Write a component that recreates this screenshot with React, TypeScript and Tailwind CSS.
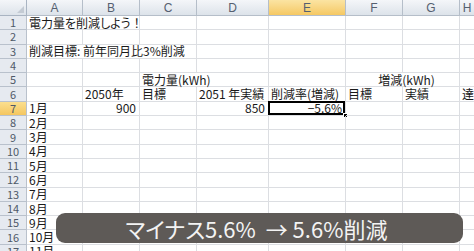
import React from 'react'

type Cell = { text: React.ReactNode; span?: number; align?: 'left' | 'right' | 'center'; selected?: boolean }

const COLS = ['A', 'B', 'C', 'D', 'E', 'F', 'G', 'H']

const sheet: Record<number, Record<string, Cell>> = {
  1: {
    A: {
      text: (
        <>
          電力量を削減しよう<span className="[font-feature-settings:normal]">！</span>
        </>
      ),
      span: 2,
    },
  },
  3: { A: { text: '削減目標: 前年同月比3%削減', span: 3 } },
  5: {
    C: { text: '電力量(kWh)', span: 2 },
    F: { text: '増減(kWh)', span: 2, align: 'center' },
  },
  6: {
    B: { text: '2050年' },
    C: { text: '目標' },
    D: { text: '2051 年実績' },
    E: { text: '削減率(増減)' },
    F: { text: '目標' },
    G: { text: '実績' },
    H: { text: '達' },
  },
  7: {
    A: { text: '1月' },
    B: { text: '900', align: 'right' },
    D: { text: '850', align: 'right' },
    E: { text: '−5.6%', align: 'right', selected: true },
  },
}

for (let r = 8; r <= 17; r++) sheet[r] = { A: { text: `${r - 6}月` } }

const spanClass: Record<number, string> = { 1: 'col-span-1', 2: 'col-span-2', 3: 'col-span-3' }
const alignClass = { left: 'justify-start pl-[2px]', right: 'justify-end pr-[3px]', center: 'justify-center pl-[8px]' }

function Row({ n }: { n: number }) {
  const cells = sheet[n] ?? {}
  const out: React.ReactNode[] = []
  let i = 0
  while (i < COLS.length) {
    const c = cells[COLS[i]]
    const span = c?.span ?? 1
    out.push(
      <div
        key={COLS[i]}
        className={`relative flex items-center whitespace-nowrap border-r border-b border-[#dcdee2] text-[12px] leading-none text-[#1a1a1a] ${spanClass[span]} ${alignClass[c?.align ?? 'left']}`}
      >
        {c?.text}
        {c?.selected && (
          <>
            <div className="absolute -left-[1px] -top-[1px] right-0 bottom-0 border-2 border-black" />
            <div className="absolute -right-[3px] -bottom-[3px] h-[5px] w-[5px] border border-white bg-black" />
          </>
        )}
      </div>
    )
    i += span
  }
  return (
    <>
      <div
        className={`flex items-center justify-center border-r border-b border-[#b9c1cc] text-[11px] leading-none text-[#4e5968] ${
          n === 7 ? 'bg-gradient-to-b from-[#fbdf8e] to-[#f4c65f]' : 'bg-[#e6eaf0]'
        }`}
      >
        {n}
      </div>
      {out}
    </>
  )
}

export default function App() {
  const rows = Array.from({ length: 17 }, (_, k) => k + 1)
  return (
    <div className="relative h-[251px] w-[474px] overflow-hidden bg-white font-['Noto_Sans_CJK_JP',sans-serif] [font-feature-settings:'palt']">
      <div className="grid grid-cols-[27px_56px_57px_57px_72px_77px_57px_57px_1fr] grid-rows-[16px] auto-rows-[14.3px]">
        {/* header row */}
        <div className="flex items-end justify-end border-r border-b border-[#a9b4c2] bg-gradient-to-b from-[#f4f6f9] to-[#dde3ea] p-[2px]">
          <svg width="7" height="7" viewBox="0 0 7 7">
            <path d="M7 0 L7 7 L0 7 Z" fill="#c4cbd4" />
          </svg>
        </div>
        {COLS.map((c) => (
          <div
            key={c}
            className={`flex items-center justify-center border-r border-b border-[#b5bec9] font-['Liberation_Sans',sans-serif] text-[12px] leading-none text-[#556070] ${
              c === 'E'
                ? 'bg-gradient-to-b from-[#fbe4a2] to-[#f5c862]'
                : 'bg-gradient-to-b from-[#f4f6f9] to-[#dde3ea]'
            }`}
          >
            {c}
          </div>
        ))}
        {rows.map((n) => (
          <Row key={n} n={n} />
        ))}
      </div>

      {/* caption overlay */}
      <div className="absolute left-[56px] top-[213px] flex h-[30px] w-[407px] items-center justify-center rounded-[9px] bg-[#5e5a57] pr-[6px] text-[22px] leading-none whitespace-pre text-[#f3f3f3]">
        マイナス5.6%  → 5.6%削減
      </div>
    </div>
  )
}
